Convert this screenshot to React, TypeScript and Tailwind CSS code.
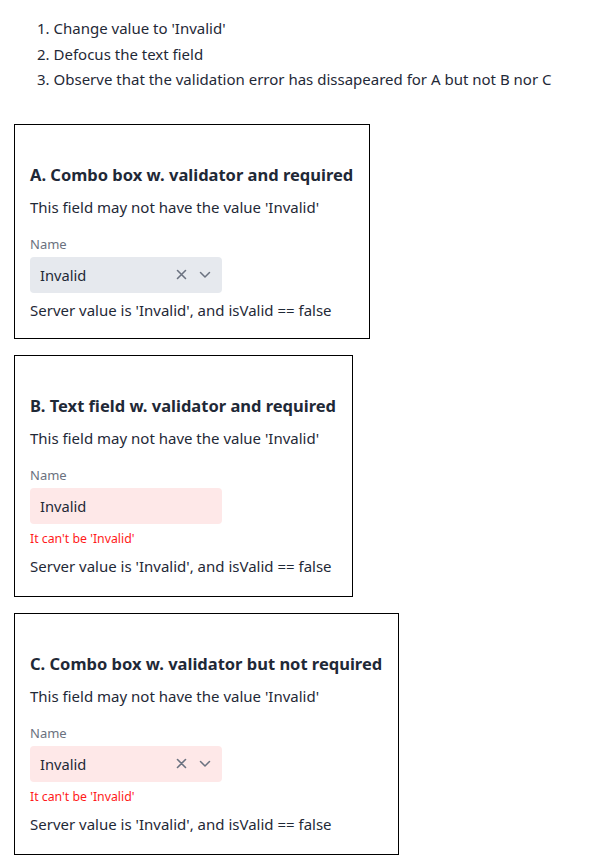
import React from "react";

const font = { fontFamily: '"Noto Sans", "Open Sans", Arial, sans-serif' };

function Icons() {
  return (
    <div className="flex items-center gap-[12px] mr-[11px]">
      <svg width="11" height="11" viewBox="0 0 11 11" fill="none" stroke="#6b7280" strokeWidth="1.6" strokeLinecap="round">
        <path d="M1.5 1.5 L9.5 9.5 M9.5 1.5 L1.5 9.5" />
      </svg>
      <svg width="12" height="8" viewBox="0 0 12 8" fill="none" stroke="#6b7280" strokeWidth="1.5" strokeLinecap="round" strokeLinejoin="round">
        <path d="M1.5 1.5 L6 6 L10.5 1.5" />
      </svg>
    </div>
  );
}

function Field({ invalid, combo }: { invalid: boolean; combo: boolean }) {
  return (
    <div className="flex flex-col">
      <div className="text-[13px] leading-[18px] text-[#6b7280]">Name</div>
      <div
        className={
          "mt-[4px] w-[192px] h-[36px] rounded-[4px] flex items-center justify-between pl-[10px] " +
          (invalid ? "bg-[#fee8e8]" : "bg-[#e6e9ee]")
        }
      >
        <span className="text-[14.7px] leading-[22px] pt-[1px] text-[#1f2937]">Invalid</span>
        {combo && <Icons />}
      </div>
      {invalid && (
        <div className="mt-[6px] text-[12.3px] leading-[18px] text-[#ff1a1a]">It can't be 'Invalid'</div>
      )}
    </div>
  );
}

function Box({ title, invalid, combo }: { title: string; invalid: boolean; combo: boolean }) {
  return (
    <div className={"border border-black pt-[36px] pl-[15px] pr-[16px] w-fit " + (invalid ? "pb-[18px]" : "pb-[16px]")}>
      <h2 className="text-[16.5px] leading-[27px] font-bold text-[#1f2937]">{title}</h2>
      <p className="mt-[7px] text-[15px] leading-[24px] text-[#1f2937]">This field may not have the value 'Invalid'</p>
      <div className="mt-[16px]">
        <Field invalid={invalid} combo={combo} />
      </div>
      <p className={(invalid ? "mt-[6px]" : "mt-[5px]") + " text-[15px] leading-[24px] text-[#1f2937]"}>
        Server value is 'Invalid', and isValid == false
      </p>
    </div>
  );
}

export default function App() {
  return (
    <div className="min-h-screen bg-white px-[14px]" style={font}>
      <ol className="list-decimal list-inside pl-[23px] pt-[16px] text-[15px] leading-[25.5px] text-[#1f2937]">
        <li>Change value to 'Invalid'</li>
        <li>Defocus the text field</li>
        <li>Observe that the validation error has dissapeared for A but not B nor C</li>
      </ol>
      <div className="mt-[31px] flex flex-col items-start">
        <Box title="A. Combo box w. validator and required" invalid={false} combo={true} />
        <div className="mt-[16px]">
          <Box title="B. Text field w. validator and required" invalid={true} combo={false} />
        </div>
        <div className="mt-[16px]">
          <Box title="C. Combo box w. validator but not required" invalid={true} combo={true} />
        </div>
      </div>
    </div>
  );
}
